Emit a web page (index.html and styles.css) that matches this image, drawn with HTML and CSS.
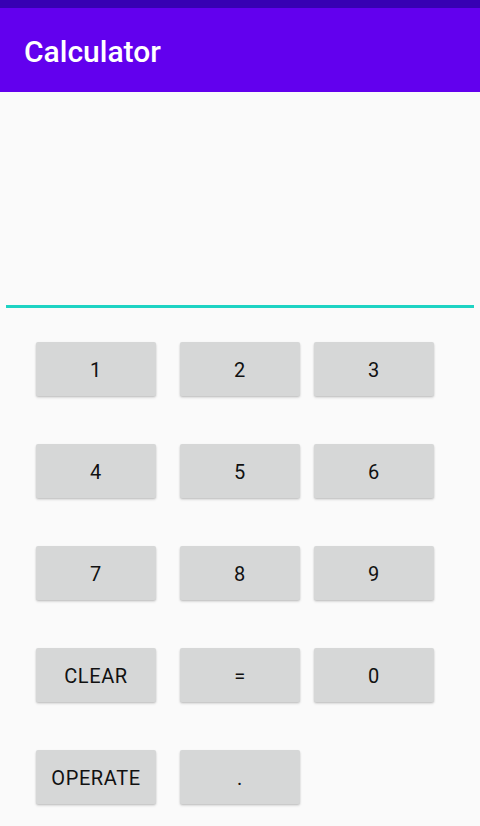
FILE: index.html
```html
<!DOCTYPE html>
<html>
<head>
	<title>Calculator</title>
	<meta charset="utf-8">
	<link rel="stylesheet" href="styles.css">
</head>
<body>
	<div class="status-bar"></div>
	<header class="app-bar">
		<h1>Calculator</h1>
	</header>
	<section class="display">
		<div class="display-field"></div>
	</section>
	<section class="keys">
		<button>1</button>
		<button>2</button>
		<button>3</button>
		<button>4</button>
		<button>5</button>
		<button>6</button>
		<button>7</button>
		<button>8</button>
		<button>9</button>
		<button>Clear</button>
		<button>=</button>
		<button>0</button>
		<button>Operate</button>
		<button>.</button>
	</section>
</body>
</html>
```
FILE: styles.css
```css
:root{
	--primary: #6200ee;
	--primary-dark: #3700b3;
	--accent: #1ed3c3;
	--key: #d6d7d7;
}
*{
	margin: 0;
	padding: 0;
	box-sizing: border-box;
}
body{
	background: #fafafa;
	font-family: Roboto, "Noto Sans", sans-serif;
	width: 480px;
	height: 826px;
	overflow: hidden;
}
.status-bar{
	height: 8px;
	background: var(--primary-dark);
}
.app-bar{
	height: 84px;
	background: var(--primary);
	display: flex;
	align-items: center;
	padding-left: 24px;
}
.app-bar h1{
	color: white;
	font-size: 30px;
	font-weight: 500;
	margin-top: 2px;
}
.display{
	padding: 0 6px;
	height: 216px;
	display: flex;
	align-items: flex-end;
}
.display-field{
	width: 100%;
	border-bottom: 3px solid var(--accent);
}
.keys{
	display: grid;
	grid-template-columns: 144px 134px 120px;
	row-gap: 48px;
	padding: 34px 0 0 36px;
}
.keys button{
	width: 120px;
	height: 54px;
	padding-top: 2px;
	border: none;
	border-radius: 2px;
	background: var(--key);
	color: #111;
	font-family: Roboto, "Noto Sans", sans-serif;
	font-size: 20px;
	letter-spacing: 0.6px;
	text-transform: uppercase;
	box-shadow: 0 1px 2px rgba(0,0,0,0.18), 0 2px 3px rgba(0,0,0,0.08);
}
```
